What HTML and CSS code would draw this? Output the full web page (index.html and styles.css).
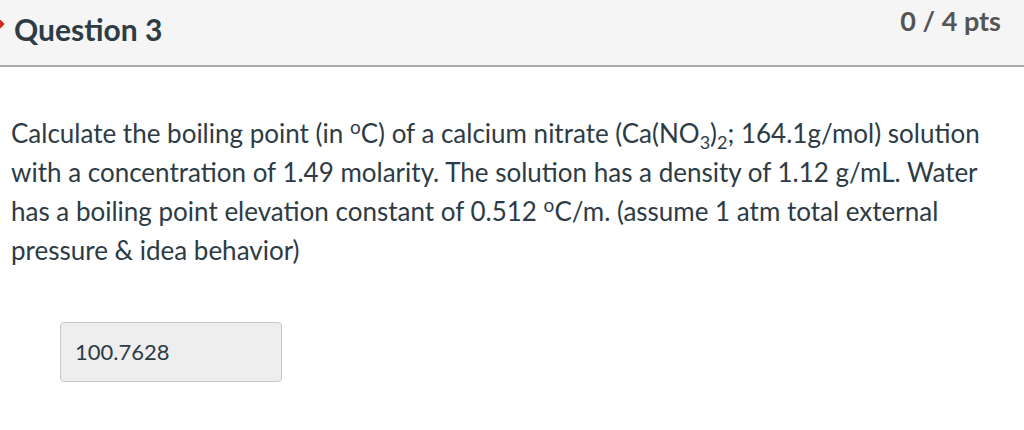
FILE: index.html
```html
<!DOCTYPE html>
<html>
<head>
<meta charset="utf-8">
<link rel="stylesheet" href="styles.css">
</head>
<body>
<div class="question">
  <div class="header">
    <span class="marker"></span>
    <h2 class="title">Question 3</h2>
    <div class="points">0 / 4 pts</div>
  </div>
  <div class="body">
    <p class="text">Calculate the boiling point (in <sup>o</sup>C) of a calcium nitrate (Ca(NO<sub>3</sub>)<sub>2</sub>; 164.1g/mol) solution with a concentration of 1.49 molarity. The solution has a density of 1.12 g/mL. Water has a boiling point elevation constant of 0.512 <sup>o</sup>C/m. (assume 1 atm total external pressure &amp; idea behavior)</p>
    <div class="answer">100.7628</div>
  </div>
</div>
</body>
</html>
```

FILE: styles.css
```css
html, body {
  margin: 0;
  padding: 0;
  background: #fff;
  font-family: Lato, "Liberation Sans", sans-serif;
  color: #2d3b45;
}
.question {
  width: 1024px;
}
.header {
  position: relative;
  height: 65px;
  background: #f5f5f5;
  border-bottom: 2px solid #aaaaaa;
  display: flex;
  justify-content: space-between;
  align-items: flex-start;
  padding: 0 23px 0 14px;
}
.marker {
  position: absolute;
  left: -5px;
  top: 20px;
  width: 8px;
  height: 8px;
  background: #d0281a;
  transform: rotate(45deg);
}
.title {
  margin: 10px 0 0 0;
  font-size: 30px;
  font-weight: 700;
  line-height: 38px;
  color: #2d3b45;
}
.points {
  margin-top: 3px;
  font-size: 27px;
  font-weight: 700;
  color: #555555;
  line-height: 36px;
}
.body {
  padding: 1px 20px 0 11px;
}
.text {
  margin: 46px 0 0 0;
  font-size: 26px;
  line-height: 39px;
  width: 990px;
}
.text sup {
  font-size: 19px;
  line-height: 0;
  vertical-align: 9px;
}
.text sub {
  font-size: 18px;
  line-height: 0;
  vertical-align: -6px;
}
.answer {
  margin: 52px 0 0 49px;
  width: 222px;
  height: 60px;
  box-sizing: border-box;
  background: #eeeeee;
  border: 1px solid #c8c8c8;
  border-radius: 4px;
  font-size: 22px;
  line-height: 58px;
  padding-left: 14px;
  color: #2d3b45;
}
```
